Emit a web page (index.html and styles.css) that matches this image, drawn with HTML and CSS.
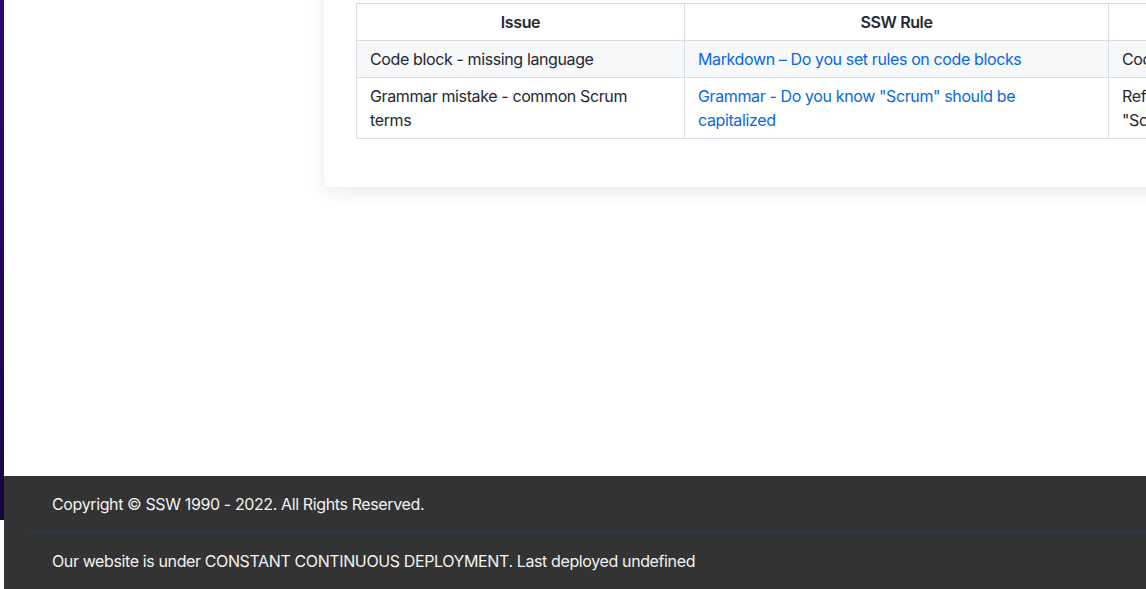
FILE: index.html
```html
<!DOCTYPE html>
<html lang="en">
<head>
<meta charset="utf-8">
<title>SSW Rules</title>
<link rel="stylesheet" href="styles.css">
</head>
<body>
<div class="layout">
  <aside class="sidebar"></aside>
  <div class="main">
    <div class="content">
      <div class="card">
        <table class="rules-table">
          <colgroup>
            <col class="col-issue">
            <col class="col-rule">
            <col class="col-fix">
          </colgroup>
          <thead>
            <tr>
              <th>Issue</th>
              <th>SSW Rule</th>
              <th>Suggested fix</th>
            </tr>
          </thead>
          <tbody>
            <tr>
              <td>Code block - missing language</td>
              <td><a href="#">Markdown – Do you set rules on code blocks</a></td>
              <td>Code blocks should specify a language</td>
            </tr>
            <tr>
              <td>Grammar mistake - common Scrum terms</td>
              <td><a href="#">Grammar - Do you know "Scrum" should be capitalized</a></td>
              <td>Refer to the term with a capital letter,<br>"Scrum" not "scrum"</td>
            </tr>
          </tbody>
        </table>
      </div>
    </div>
    <footer class="footer">
      <p class="footer-text">Copyright © SSW 1990 - 2022. All Rights Reserved.</p>
      <hr class="footer-divider">
      <p class="footer-text">Our website is under CONSTANT CONTINUOUS DEPLOYMENT. Last deployed undefined</p>
    </footer>
  </div>
</div>
</body>
</html>
```

FILE: styles.css
```css
html, body {
  margin: 0;
  padding: 0;
  background: #ffffff;
  overflow: hidden;
  font-family: Inter, "Noto Sans", "Liberation Sans", sans-serif;
  font-size: 16px;
  line-height: 24px;
  letter-spacing: -0.38px;
  color: #24292f;
}

.layout {
  display: flex;
  align-items: flex-start;
  width: 1146px;
}

.sidebar {
  flex: 0 0 4px;
  height: 520px;
  background: linear-gradient(180deg, #2a0a72 0%, #22075a 60%, #1a0440 100%);
}

.main {
  flex: 1;
  min-width: 0;
  display: flex;
  flex-direction: column;
}

.content {
  height: 476px;
  padding-left: 320px;
}

.card {
  width: 1200px;
  margin-top: -29px;
  padding: 32px 0 48px 32px;
  background: #ffffff;
  border-radius: 6px;
  box-shadow: 0 4px 18px rgba(0, 0, 0, 0.09);
}

.rules-table {
  border-collapse: collapse;
  border-spacing: 0;
  table-layout: fixed;
  width: 1160px;
}

.col-issue { width: 328px; }
.col-rule { width: 424px; }
.col-fix { width: 408px; }

.rules-table th,
.rules-table td {
  border: 1px solid #d8dee4;
  padding: 6px 13px;
  text-align: left;
  vertical-align: top;
}

.rules-table th {
  font-weight: 600;
  text-align: center;
}

.rules-table tbody tr:nth-child(odd) {
  background: #f6f8fa;
}

.rules-table a {
  color: #0969da;
  text-decoration: none;
}

.footer {
  background: #333333;
  padding: 16px 0 16px 24px;
  height: 113px;
  box-sizing: border-box;
}

.footer-text {
  margin: 0;
  padding-left: 24px;
  color: #f2f2f2;
  font-size: 16px;
  line-height: 24px;
}

.footer-divider {
  margin: 16px 0;
  border: 0;
  height: 1px;
  background: #2c3a52;
}
```
